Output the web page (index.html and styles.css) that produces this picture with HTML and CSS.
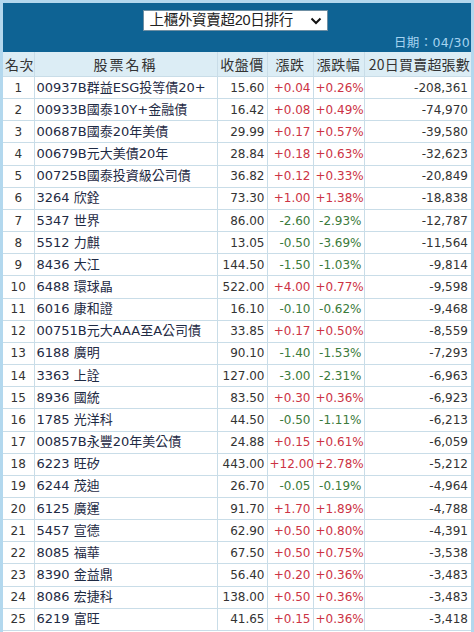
FILE: index.html
```html
<!DOCTYPE html>
<html lang="zh-Hant">
<head>
<meta charset="utf-8">
<title>上櫃外資賣超20日排行</title>
<link rel="stylesheet" href="styles.css">
</head>
<body>
<div class="wrap">
  <div class="top">
    <div class="picker">
      <span class="picker-text">上櫃外資賣超20日排行</span>
      <svg class="chev" width="12" height="8" viewBox="0 0 12 8"><path d="M1.5 1.5 L6 6 L10.5 1.5" fill="none" stroke="#111" stroke-width="2"/></svg>
    </div>
    <div class="date">日期：04/30</div>
  </div>
  <table class="rank">
    <colgroup>
      <col class="c1"><col class="c2"><col class="c3"><col class="c4"><col class="c5"><col class="c6">
    </colgroup>
    <thead>
      <tr><th>名次</th><th>股票名稱</th><th>收盤價</th><th>漲跌</th><th>漲跌幅</th><th>20日買賣超張數</th></tr>
    </thead>
    <tbody>
      <tr><td class="rk">1</td><td class="nm">00937B群益ESG投等債20+</td><td class="num">15.60</td><td class="num up">+0.04</td><td class="num up">+0.26%</td><td class="num">-208,361</td></tr>
      <tr><td class="rk">2</td><td class="nm">00933B國泰10Y+金融債</td><td class="num">16.42</td><td class="num up">+0.08</td><td class="num up">+0.49%</td><td class="num">-74,970</td></tr>
      <tr><td class="rk">3</td><td class="nm">00687B國泰20年美債</td><td class="num">29.99</td><td class="num up">+0.17</td><td class="num up">+0.57%</td><td class="num">-39,580</td></tr>
      <tr><td class="rk">4</td><td class="nm">00679B元大美債20年</td><td class="num">28.84</td><td class="num up">+0.18</td><td class="num up">+0.63%</td><td class="num">-32,623</td></tr>
      <tr><td class="rk">5</td><td class="nm">00725B國泰投資級公司債</td><td class="num">36.82</td><td class="num up">+0.12</td><td class="num up">+0.33%</td><td class="num">-20,849</td></tr>
      <tr><td class="rk">6</td><td class="nm">3264 欣銓</td><td class="num">73.30</td><td class="num up">+1.00</td><td class="num up">+1.38%</td><td class="num">-18,838</td></tr>
      <tr><td class="rk">7</td><td class="nm">5347 世界</td><td class="num">86.00</td><td class="num dn">-2.60</td><td class="num dn">-2.93%</td><td class="num">-12,787</td></tr>
      <tr><td class="rk">8</td><td class="nm">5512 力麒</td><td class="num">13.05</td><td class="num dn">-0.50</td><td class="num dn">-3.69%</td><td class="num">-11,564</td></tr>
      <tr><td class="rk">9</td><td class="nm">8436 大江</td><td class="num">144.50</td><td class="num dn">-1.50</td><td class="num dn">-1.03%</td><td class="num">-9,814</td></tr>
      <tr><td class="rk">10</td><td class="nm">6488 環球晶</td><td class="num">522.00</td><td class="num up">+4.00</td><td class="num up">+0.77%</td><td class="num">-9,598</td></tr>
      <tr><td class="rk">11</td><td class="nm">6016 康和證</td><td class="num">16.10</td><td class="num dn">-0.10</td><td class="num dn">-0.62%</td><td class="num">-9,468</td></tr>
      <tr><td class="rk">12</td><td class="nm">00751B元大AAA至A公司債</td><td class="num">33.85</td><td class="num up">+0.17</td><td class="num up">+0.50%</td><td class="num">-8,559</td></tr>
      <tr><td class="rk">13</td><td class="nm">6188 廣明</td><td class="num">90.10</td><td class="num dn">-1.40</td><td class="num dn">-1.53%</td><td class="num">-7,293</td></tr>
      <tr><td class="rk">14</td><td class="nm">3363 上詮</td><td class="num">127.00</td><td class="num dn">-3.00</td><td class="num dn">-2.31%</td><td class="num">-6,963</td></tr>
      <tr><td class="rk">15</td><td class="nm">8936 國統</td><td class="num">83.50</td><td class="num up">+0.30</td><td class="num up">+0.36%</td><td class="num">-6,923</td></tr>
      <tr><td class="rk">16</td><td class="nm">1785 光洋科</td><td class="num">44.50</td><td class="num dn">-0.50</td><td class="num dn">-1.11%</td><td class="num">-6,213</td></tr>
      <tr><td class="rk">17</td><td class="nm">00857B永豐20年美公債</td><td class="num">24.88</td><td class="num up">+0.15</td><td class="num up">+0.61%</td><td class="num">-6,059</td></tr>
      <tr><td class="rk">18</td><td class="nm">6223 旺矽</td><td class="num">443.00</td><td class="num up">+12.00</td><td class="num up">+2.78%</td><td class="num">-5,212</td></tr>
      <tr><td class="rk">19</td><td class="nm">6244 茂迪</td><td class="num">26.70</td><td class="num dn">-0.05</td><td class="num dn">-0.19%</td><td class="num">-4,964</td></tr>
      <tr><td class="rk">20</td><td class="nm">6125 廣運</td><td class="num">91.70</td><td class="num up">+1.70</td><td class="num up">+1.89%</td><td class="num">-4,788</td></tr>
      <tr><td class="rk">21</td><td class="nm">5457 宣德</td><td class="num">62.90</td><td class="num up">+0.50</td><td class="num up">+0.80%</td><td class="num">-4,391</td></tr>
      <tr><td class="rk">22</td><td class="nm">8085 福華</td><td class="num">67.50</td><td class="num up">+0.50</td><td class="num up">+0.75%</td><td class="num">-3,538</td></tr>
      <tr><td class="rk">23</td><td class="nm">8390 金益鼎</td><td class="num">56.40</td><td class="num up">+0.20</td><td class="num up">+0.36%</td><td class="num">-3,483</td></tr>
      <tr><td class="rk">24</td><td class="nm">8086 宏捷科</td><td class="num">138.00</td><td class="num up">+0.50</td><td class="num up">+0.36%</td><td class="num">-3,483</td></tr>
      <tr><td class="rk">25</td><td class="nm">6219 富旺</td><td class="num">41.65</td><td class="num up">+0.15</td><td class="num up">+0.36%</td><td class="num">-3,418</td></tr>
    </tbody>
  </table>
</div>
</body>
</html>
```
FILE: styles.css
```css
html, body {
  margin: 0;
  padding: 0;
  background: #ffffff;
}
body {
  font-family: "DejaVu Sans", "Noto Sans CJK TC", sans-serif;
  color: #333333;
}
.wrap {
  width: 474px;
  height: 632px;
  box-sizing: border-box;
  border: 3px solid #b3d8ee;
  border-bottom: 0;
  overflow: hidden;
  background: #ffffff;
}
.top {
  background: #0e6394;
  height: 49px;
  box-sizing: border-box;
  padding-top: 7px;
  display: flex;
  flex-direction: column;
  align-items: center;
}
.picker {
  width: 185px;
  height: 21px;
  box-sizing: border-box;
  background: #ffffff;
  border: 1px solid #6f8fa3;
  display: flex;
  align-items: center;
  justify-content: space-between;
  padding: 0 5px 0 6px;
  margin-right: 4px;
}
.picker-text {
  font-family: "Liberation Sans", "Noto Sans CJK TC", sans-serif;
  font-size: 14.5px;
  color: #222222;
  line-height: 19px;
  letter-spacing: -0.3px;
}
.chev {
  display: block;
}
.date {
  align-self: flex-end;
  margin-top: 3px;
  padding-right: 1px;
  font-family: "DejaVu Sans", "Noto Sans CJK TC", sans-serif;
  font-size: 12.5px;
  line-height: 17px;
  color: #a6d4f0;
  letter-spacing: 0.3px;
}
.rank {
  width: 468px;
  border-collapse: collapse;
  table-layout: fixed;
}
.c1 { width: 31px; }
.c2 { width: 183px; }
.c3 { width: 50px; }
.c4 { width: 46px; }
.c5 { width: 51px; }
.c6 { width: 107px; }
.rank th {
  height: 24px;
  padding: 0 2px;
  background: #dcedf5;
  font-family: "Noto Sans CJK TC", sans-serif;
  font-weight: normal;
  font-size: 14px;
  color: #333333;
  border-left: 1px solid #c9dde8;
  border-bottom: 1px solid #c9dde8;
  white-space: nowrap;
  letter-spacing: 0.5px;
}
.rank th:first-child { border-left: 0; }
.rank th:nth-child(2) { letter-spacing: 2px; }
.rank th:last-child { text-align: right; letter-spacing: 0.2px; padding-right: 1px; }
.rank td {
  height: 21.16px;
  padding: 0 2px;
  font-size: 12px;
  line-height: 16px;
  border-left: 1px solid #c9dde8;
  border-bottom: 1px solid #c9dde8;
  white-space: nowrap;
  overflow: hidden;
}
.rank td:first-child { border-left: 0; }
.rk {
  text-align: center;
  color: #333333;
  font-size: 12.5px;
}
.rank td.nm {
  text-align: left;
  color: #1e2a44;
  font-family: "DejaVu Sans", "Noto Sans CJK TC", sans-serif;
  font-size: 13px;
  padding-left: 2px;
}
.num {
  text-align: right;
  color: #333333;
}
.rank td:last-child { padding-right: 3px; }
.up { color: #cc3344; }
.dn { color: #3b7a3b; }
```
